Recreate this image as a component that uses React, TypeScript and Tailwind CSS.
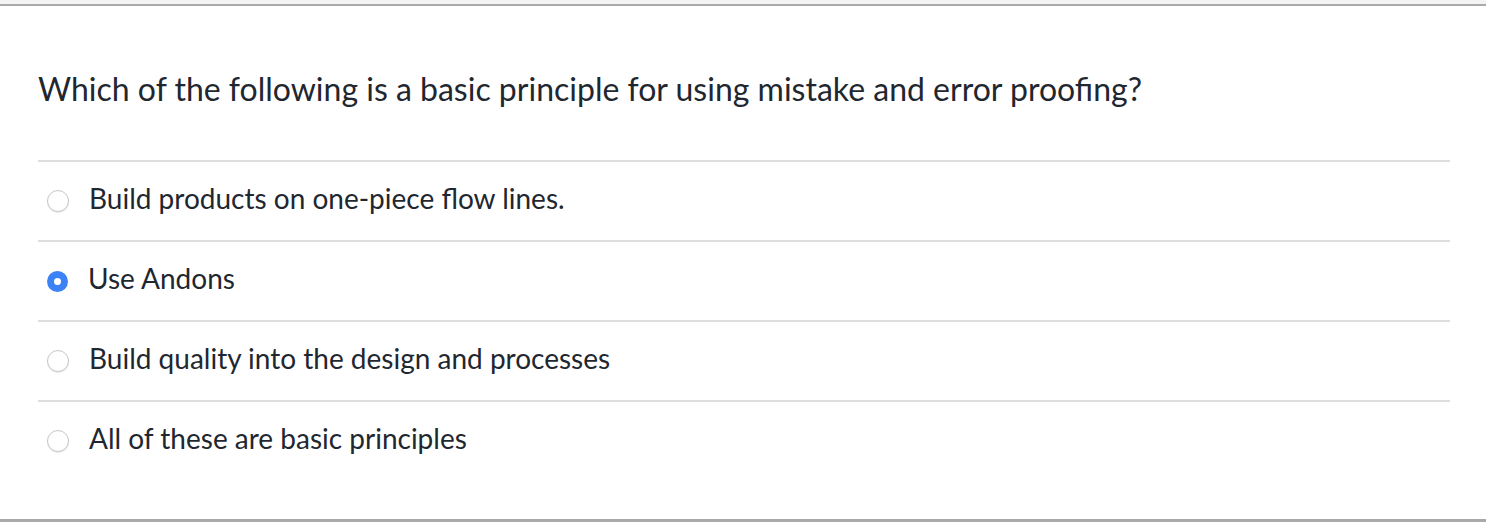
import type {FC} from 'react';

const options = [
    'Build products on one-piece flow lines.',
    'Use Andons',
    'Build quality into the design and processes',
    'All of these are basic principles',
];

const Radio: FC<{checked: boolean}> = ({checked}) =>
    checked ? (
        <span className="flex h-[21px] w-[21px] items-center justify-center rounded-full bg-[#3b82f6]">
            <span className="h-[7px] w-[7px] rounded-full bg-white" />
        </span>
    ) : (
        <span className="block h-[22px] w-[22px] rounded-full border border-[#c6c6c6] bg-white shadow-[0_1px_1px_rgba(0,0,0,0.08)]" />
    );

const App: FC = () => {
    const selected = 1;

    return (
        <div className="h-[522px] w-[1486px] bg-white font-['Lato',sans-serif] text-[#1f2730]">
            <div className="h-[4px] bg-[#f3f3f3]" />
            <div className="h-[2px] bg-[#a9a9a9]" />
            <div className="flex h-[513px] flex-col px-[38px] pr-[36px]">
                <h1 className="pt-[64px] text-[32px] leading-[38px]">
                    Which of the following is a basic principle for using mistake and error proofing?
                </h1>
                <ul className="mt-[52px]">
                    {options.map((opt, i) => (
                        <li key={opt} className="flex h-[80px] items-center border-t-2 border-[#dddddd] pl-[9px]">
                            <Radio checked={i === selected} />
                            <span className="ml-[20px] pb-[6px] text-[28px] leading-[32px]">{opt}</span>
                        </li>
                    ))}
                </ul>
            </div>
            <div className="h-[3px] bg-[#a9a9a9]" />
        </div>
    );
};

export default App;
